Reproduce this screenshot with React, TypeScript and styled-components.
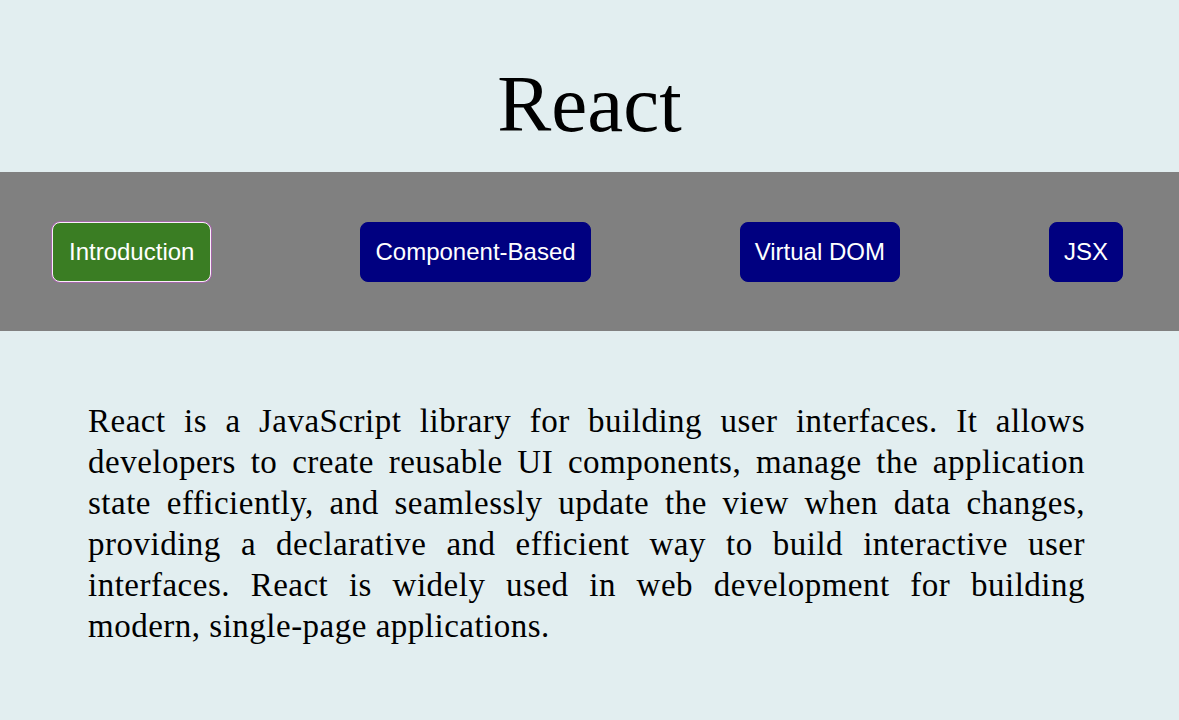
import React, { useState } from 'react';
import styled, { createGlobalStyle } from 'styled-components';

const GlobalStyle = createGlobalStyle`
  html, body {
    margin: 0;
    padding: 0;
    background: #e2eef0;
  }
`;

const Page = styled.div`
  min-height: 720px;
  background: #e2eef0;
  font-family: "Liberation Serif", "Times New Roman", serif;
  color: #000;
`;

const Header = styled.header`
  height: 172px;
  display: flex;
  align-items: center;
  justify-content: center;
`;

const Title = styled.h1`
  margin: 0;
  padding-top: 36px;
  font-size: 81px;
  font-weight: 400;
`;

const NavBar = styled.nav`
  height: 159px;
  background: #808080;
  display: flex;
  align-items: center;
  justify-content: space-between;
  padding: 0 56px 0 52px;
  box-sizing: border-box;
`;

const TabButton = styled.button<{ $active: boolean }>`
  height: 60px;
  padding: ${(p) => (p.$active ? '0 16px' : '0 14px')};
  border-radius: 8px;
  font-family: "Liberation Sans", Arial, sans-serif;
  font-size: 24px;
  color: #ffffff;
  cursor: pointer;
  background: ${(p) => (p.$active ? '#3a7d23' : '#000080')};
  border: ${(p) => (p.$active ? '1px solid #fbeefc' : '1px solid #000080')};
  box-shadow: ${(p) => (p.$active ? '0 0 0 1px #a368a8' : 'none')};
`;

const Content = styled.main`
  padding: 70px 94px 0 88px;
`;

const Paragraph = styled.p`
  margin: 0;
  font-size: 33px;
  line-height: 41px;
  text-align: justify;
  letter-spacing: 0.5px;
`;

const tabs: { id: string; label: string; text: string }[] = [
  {
    id: 'intro',
    label: 'Introduction',
    text:
      'React is a JavaScript library for building user interfaces. It allows developers to create reusable UI components, manage the application state efficiently, and seamlessly update the view when data changes, providing a declarative and efficient way to build interactive user interfaces. React is widely used in web development for building modern, single-page applications.',
  },
  {
    id: 'components',
    label: 'Component-Based',
    text:
      'React applications are built from small, self-contained components that manage their own state and can be composed together to create complex user interfaces.',
  },
  {
    id: 'vdom',
    label: 'Virtual DOM',
    text:
      'React keeps a lightweight copy of the DOM in memory and updates only the parts of the page that actually changed, which keeps rendering fast.',
  },
  {
    id: 'jsx',
    label: 'JSX',
    text:
      'JSX is a syntax extension that lets you write HTML-like markup inside JavaScript, making components easier to read and write.',
  },
];

export default function App() {
  const [active, setActive] = useState('intro');
  const current = tabs.find((t) => t.id === active) ?? tabs[0];

  return (
    <Page>
      <GlobalStyle />
      <Header>
        <Title>React</Title>
      </Header>
      <NavBar>
        {tabs.map((t) => (
          <TabButton key={t.id} $active={t.id === active} onClick={() => setActive(t.id)}>
            {t.label}
          </TabButton>
        ))}
      </NavBar>
      <Content>
        <Paragraph>{current.text}</Paragraph>
      </Content>
    </Page>
  );
}
